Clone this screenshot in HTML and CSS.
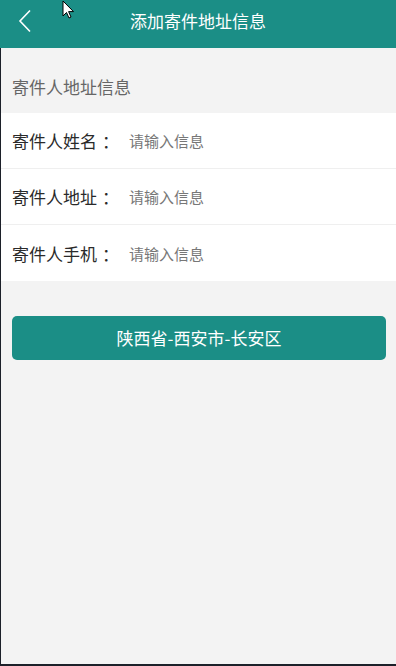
FILE: index.html
```
<!DOCTYPE html>
<html lang="zh-CN">
<head>
    <meta charset="UTF-8">
    <title>添加寄件地址信息</title>
    <link rel="stylesheet" href="styles.css">
</head>
<body>
<div class="app">
    <div class="head">
        <a href="javascript:;" class="back">
            <svg width="14" height="24" viewBox="0 0 14 24"><path d="M12 1.5 L2 12 L12 22.5" fill="none" stroke="#fff" stroke-width="1.6"/></svg>
        </a>
        <p class="title">添加寄件地址信息</p>
    </div>
    <div class="main">
        <p class="sec">寄件人地址信息</p>
        <div class="form">
            <div class="row">
                <span class="lab">寄件人姓名<i>：</i></span>
                <input type="text" class="ipt" placeholder="请输入信息">
            </div>
            <div class="row">
                <span class="lab">寄件人地址<i>：</i></span>
                <input type="text" class="ipt" placeholder="请输入信息">
            </div>
            <div class="row">
                <span class="lab">寄件人手机<i>：</i></span>
                <input type="text" class="ipt" placeholder="请输入信息">
            </div>
        </div>
        <a href="javascript:;" class="btn">陕西省-西安市-长安区</a>
    </div>
    <svg class="cursor" width="14" height="20" viewBox="0 0 14 20"><path d="M1 1 L1 16 L4.5 12.5 L7 18 L9 17 L6.6 11.6 L11.5 11.6 Z" fill="#fff" stroke="#000" stroke-width="1"/></svg>
</div>
</body>
</html>
```
FILE: styles.css
```
*{margin: 0;padding: 0;box-sizing: border-box;}
body{background: #1c2029;font-family: "Noto Sans CJK SC", "Noto Sans", sans-serif;}
.app{width: 396px;height: 666px;display: flex;flex-direction: column;position: relative;}
.head{height: 48px;background: #1b8e86;display: flex;align-items: center;justify-content: center;position: relative;}
.back{position: absolute;left: 18px;top: 9px;width: 14px;height: 24px;}
.title{color: #fff;font-size: 17px;line-height: 24px;margin-top: -7px;}
.main{flex: 1;background: #f3f3f3;margin-left: 1px;margin-bottom: 2px;}
.sec{height: 65px;line-height: 24px;padding: 27px 0 0 11px;font-size: 17px;color: #666;}
.form{background: #fff;}
.row{height: 56px;display: flex;align-items: center;padding-left: 11px;border-bottom: 1px solid #efefef;}
.row:last-child{border-bottom: none;}
.lab{font-size: 17px;color: #2a2a2a;width: 117px;}
.lab i{font-style: normal;display: inline-block;margin-left: 5px;}
.ipt{border: none;outline: none;background: none;font-family: inherit;font-size: 15px;color: #333;flex: 1;}
.ipt::placeholder{color: #777;}
.btn{display: block;margin: 35px 10px 0 11px;height: 44px;line-height: 44px;border-radius: 5px;background: #1b8e86;color: #fff;text-align: center;font-size: 17px;text-decoration: none;}
.cursor{position: absolute;left: 62px;top: 0;}
```
